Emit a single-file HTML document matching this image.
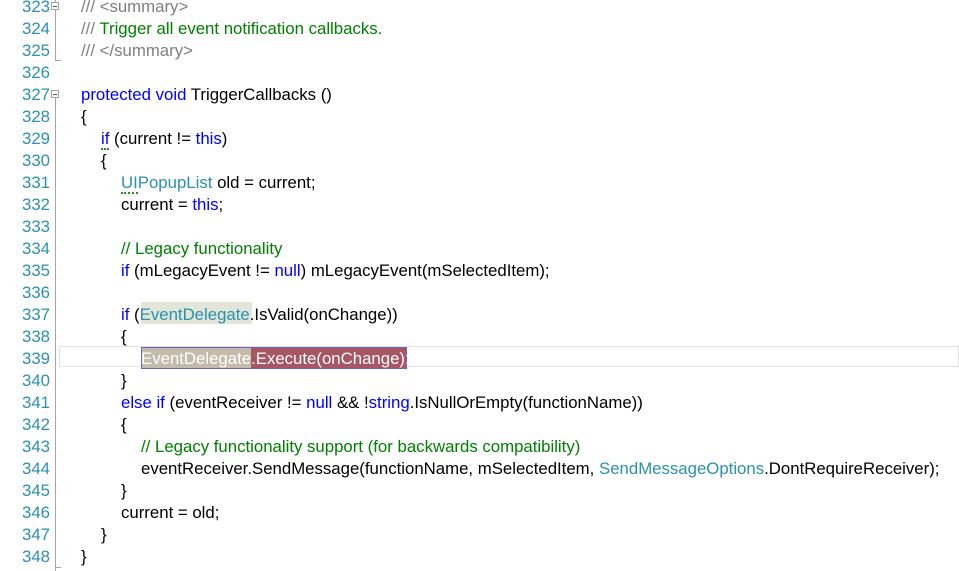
<!DOCTYPE html>
<html><head><meta charset="utf-8"><style>
html,body{margin:0;padding:0;background:#fff;width:959px;height:571px;overflow:hidden;position:relative;font-family:"Liberation Sans",sans-serif;font-size:16.8px;}
.ln{position:absolute;left:0;width:50px;text-align:right;color:#2b91af;height:22px;line-height:22px;margin-top:2px;}
.c{position:absolute;height:22px;line-height:22px;white-space:pre;color:#000;margin-top:2px;}
.k{color:#0000ff}.t{color:#2b91af}.g{color:#008000}.x{color:#808080}
.gut{position:absolute;left:55px;width:1px;background:#a5a5a5;}
.fold{position:absolute;left:51px;width:8px;height:8px;border:1px solid #a5a5a5;background:#fff;box-sizing:border-box;}
.fold:after{content:"";position:absolute;left:1px;top:3px;width:4px;height:1px;background:#555;}
.sq{border-bottom:2px dotted #2a8a2a;}
</style></head><body>
<div class="gut" style="top:0;height:60px"></div>
<div class="gut" style="top:60px;width:6px;height:1px"></div>
<div class="gut" style="top:95px;height:476px"></div>
<div class="gut" style="top:567px;width:6px;height:1px"></div>
<div class="fold" style="top:2px"></div>
<div class="fold" style="top:90px"></div>

<div style="position:absolute;left:59px;top:346px;width:900px;height:21px;border:1px solid #e2e2e2;box-sizing:border-box"></div>
<div style="position:absolute;left:141px;top:347px;width:266px;height:22px;border:1px solid #6e62c8;box-sizing:border-box;background:#a85564"></div>
<div style="position:absolute;left:142px;top:348px;width:109px;height:20px;background:#c5bbab"></div>
<div style="position:absolute;left:141px;top:302px;width:111px;height:22px;background:#e1e6d8"></div>

<div class="ln" style="top:-6px">323</div><div class="c" style="left:81px;top:-6px"><span class="x">/// &lt;summary&gt;</span></div>
<div class="ln" style="top:16px">324</div><div class="c" style="left:81px;top:16px"><span class="x">///</span><span class="g"> Trigger all event notification callbacks.</span></div>
<div class="ln" style="top:38px">325</div><div class="c" style="left:81px;top:38px"><span class="x">/// &lt;/summary&gt;</span></div>
<div class="ln" style="top:60px">326</div>
<div class="ln" style="top:82px">327</div><div class="c" style="left:81px;top:82px"><span class="k">protected void</span> TriggerCallbacks ()</div>
<div class="ln" style="top:104px">328</div><div class="c" style="left:81px;top:104px">{</div>
<div class="ln" style="top:126px">329</div><div class="c" style="left:101px;top:126px"><span class="k sq">if</span> (current != <span class="k">this</span>)</div>
<div class="ln" style="top:148px">330</div><div class="c" style="left:101px;top:148px">{</div>
<div class="ln" style="top:170px">331</div><div class="c" style="left:121px;top:170px"><span class="t"><span class="sq">UI</span>PopupList</span> old = current;</div>
<div class="ln" style="top:192px">332</div><div class="c" style="left:121px;top:192px">current = <span class="k">this</span>;</div>
<div class="ln" style="top:214px">333</div>
<div class="ln" style="top:236px">334</div><div class="c" style="left:121px;top:236px"><span class="g">// Legacy functionality</span></div>
<div class="ln" style="top:258px">335</div><div class="c" style="left:121px;top:258px"><span class="k">if</span> (mLegacyEvent != <span class="k">null</span>) mLegacyEvent(mSelectedItem);</div>
<div class="ln" style="top:280px">336</div>
<div class="ln" style="top:302px">337</div><div class="c" style="left:121px;top:302px"><span class="k">if</span> (<span class="t">EventDelegate</span>.IsValid(onChange))</div>
<div class="ln" style="top:324px">338</div><div class="c" style="left:121px;top:324px">{</div>
<div class="ln" style="top:346px">339</div><div class="c" style="left:141px;top:346px;color:#fff">EventDelegate.Execute(onChange);</div>
<div class="ln" style="top:368px">340</div><div class="c" style="left:121px;top:368px">}</div>
<div class="ln" style="top:390px">341</div><div class="c" style="left:121px;top:390px"><span class="k">else if</span> (eventReceiver != <span class="k">null</span> &amp;&amp; !<span class="k">string</span>.IsNullOrEmpty(functionName))</div>
<div class="ln" style="top:412px">342</div><div class="c" style="left:121px;top:412px">{</div>
<div class="ln" style="top:434px">343</div><div class="c" style="left:141px;top:434px"><span class="g">// Legacy functionality support (for backwards compatibility)</span></div>
<div class="ln" style="top:456px">344</div><div class="c" style="left:141px;top:456px">eventReceiver.SendMessage(functionName, mSelectedItem, <span class="t">SendMessageOptions</span>.DontRequireReceiver);</div>
<div class="ln" style="top:478px">345</div><div class="c" style="left:121px;top:478px">}</div>
<div class="ln" style="top:500px">346</div><div class="c" style="left:121px;top:500px">current = old;</div>
<div class="ln" style="top:522px">347</div><div class="c" style="left:101px;top:522px">}</div>
<div class="ln" style="top:544px">348</div><div class="c" style="left:81px;top:544px">}</div>
</body></html>
